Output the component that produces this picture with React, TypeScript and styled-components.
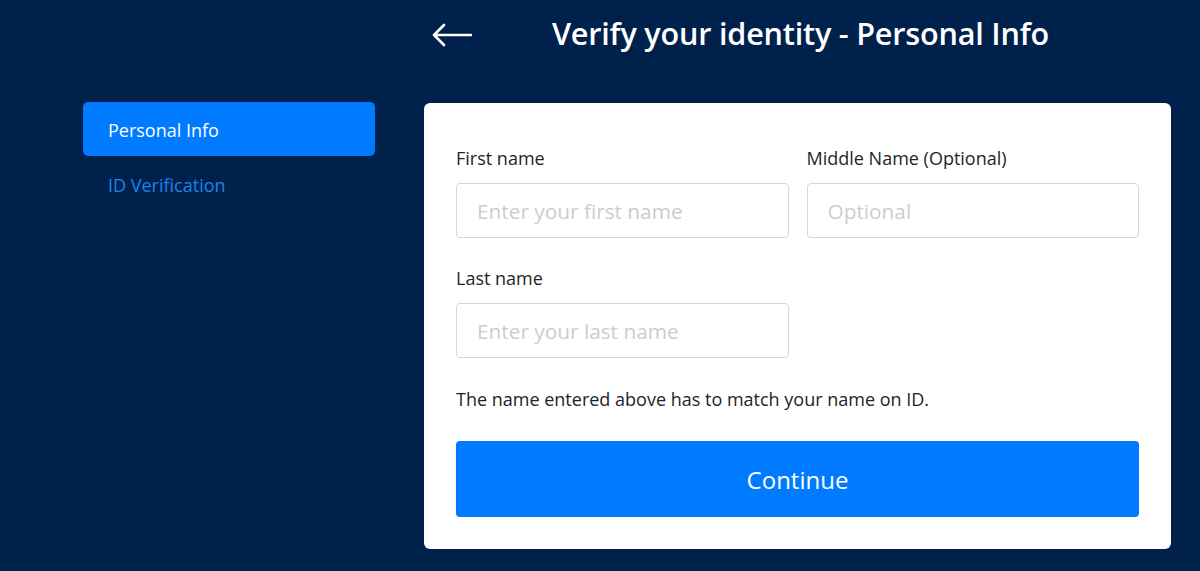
import React from "react";
import styled, { createGlobalStyle } from "styled-components";

const Global = createGlobalStyle`
  html, body { margin: 0; padding: 0; }
  body {
    background: #01214d;
    font-family: "Open Sans", "Noto Sans", "Liberation Sans", sans-serif;
    color: #212529;
  }
  * { box-sizing: border-box; }
`;

const Page = styled.div`
  display: grid;
  grid-template-columns: 292px 747px;
  grid-template-rows: 103px auto;
  column-gap: 49px;
  padding-left: 83px;
  min-height: 571px;
`;

const Header = styled.header`
  grid-column: 2;
  grid-row: 1;
  position: relative;
  display: flex;
  align-items: flex-start;
  justify-content: center;
  padding-top: 13px;
`;

const BackButton = styled.button`
  position: absolute;
  left: 8px;
  top: 23px;
  width: 40px;
  height: 24px;
  padding: 0;
  border: none;
  background: transparent;
  cursor: pointer;
  display: flex;
  align-items: center;
`;

const Title = styled.h1`
  margin: 0;
  color: #ffffff;
  font-size: 30.6px;
  font-weight: 600;
  line-height: 40px;
  letter-spacing: -0.2px;
  transform: translateX(3px);
`;

const Sidebar = styled.nav`
  grid-column: 1;
  grid-row: 2;
  display: flex;
  flex-direction: column;
  margin-top: -1px;
`;

const NavItem = styled.a<{ $active?: boolean }>`
  display: flex;
  align-items: center;
  height: ${(p) => (p.$active ? "54px" : "58px")};
  padding-left: 25px;
  padding-top: ${(p) => (p.$active ? "2px" : "0")};
  border-radius: 5px;
  font-size: 18px;
  text-decoration: none;
  cursor: pointer;
  background: ${(p) => (p.$active ? "#007bff" : "transparent")};
  color: ${(p) => (p.$active ? "#ffffff" : "#1b84ec")};
`;

const Card = styled.section`
  grid-column: 2;
  grid-row: 2;
  align-self: start;
  background: #ffffff;
  border-radius: 6px;
  padding: 43px 32px 32px;
  height: 446px;
`;

const Row = styled.div`
  display: grid;
  grid-template-columns: 1fr 1fr;
  column-gap: 18px;
  margin-bottom: 28px;
`;

const Field = styled.div`
  display: flex;
  flex-direction: column;
`;

const Label = styled.label`
  font-size: 18px;
  line-height: 24px;
  margin-bottom: 13px;
  color: #212529;
`;

const Input = styled.input`
  height: 55px;
  border: 1px solid #d4d7db;
  border-radius: 4px;
  padding: 0 20px;
  font-family: inherit;
  font-size: 20.8px;
  color: #212529;
  outline: none;
  &::placeholder { color: #c9cdd3; }
`;

const Note = styled.p`
  margin: 29px 0 30px;
  font-size: 18px;
  line-height: 24px;
  color: #212529;
`;

const Submit = styled.button`
  width: 100%;
  height: 76px;
  border: none;
  border-radius: 4px;
  background: #007bff;
  color: #ffffff;
  font-family: inherit;
  font-size: 24px;
  cursor: pointer;
`;

export default function App() {
  return (
    <>
      <Global />
      <Page>
        <Header>
          <BackButton aria-label="Back">
            <svg width="40" height="24" viewBox="0 0 40 24" fill="none">
              <path d="M2 12H39M2 12L12 2M2 12L12 22" stroke="#fff" strokeWidth="2.6" strokeLinecap="round" strokeLinejoin="round" />
            </svg>
          </BackButton>
          <Title>Verify your identity - Personal Info</Title>
        </Header>
        <Sidebar>
          <NavItem $active>Personal Info</NavItem>
          <NavItem>ID Verification</NavItem>
        </Sidebar>
        <Card>
          <Row>
            <Field>
              <Label>First name</Label>
              <Input placeholder="Enter your first name" />
            </Field>
            <Field>
              <Label>Middle Name (Optional)</Label>
              <Input placeholder="Optional" />
            </Field>
          </Row>
          <Row>
            <Field>
              <Label>Last name</Label>
              <Input placeholder="Enter your last name" />
            </Field>
          </Row>
          <Note>The name entered above has to match your name on ID.</Note>
          <Submit>Continue</Submit>
        </Card>
      </Page>
    </>
  );
}
